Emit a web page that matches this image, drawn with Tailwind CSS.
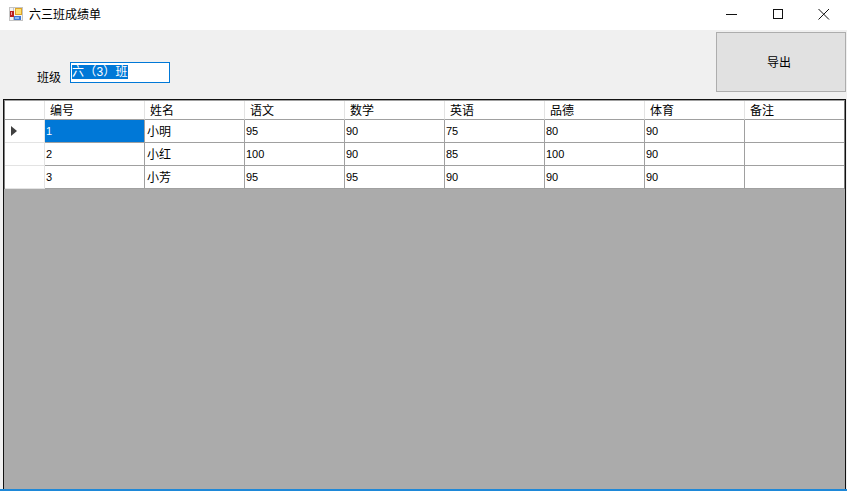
<!DOCTYPE html>
<html lang="zh">
<head>
<meta charset="utf-8">
<script src="https://cdn.jsdelivr.net/npm/@tailwindcss/browser@4"></script>
</head>
<body class="w-[847px] h-[491px] overflow-hidden bg-[#f0f0f0] text-black text-[12px] leading-none font-['Liberation_Sans','Noto_Sans_CJK_SC',sans-serif]">
<div class="flex flex-col h-full border-b-2 border-[#1e88d8]">
  <div class="h-[30px] bg-white flex items-center shrink-0">
    <svg class="ml-[9px] mb-[2px] w-[14px] h-[14px]" viewBox="0 0 14 14">
      <rect x="0" y="0" width="14" height="14" fill="#c4c4c4"/>
      <rect x="1" y="1" width="12" height="12" fill="#f4f4f4"/>
      <rect x="4" y="0" width="1" height="14" fill="#c4c4c4"/>
      <rect x="0" y="9" width="5" height="1" fill="#c4c4c4"/>
      <rect x="6" y="1" width="7" height="7" fill="#dca428"/>
      <rect x="7" y="2" width="5" height="5" fill="#ffe070"/>
      <rect x="1" y="4" width="4" height="6" fill="#b82020"/>
      <rect x="2" y="5" width="1" height="3" fill="#f0a0a0"/>
      <rect x="5" y="9" width="7" height="4" fill="#3f78d4"/>
      <rect x="6" y="10" width="4" height="2" fill="#8fb8f0"/>
    </svg>
    <span class="ml-[6px] text-[12px]">六三班成绩单</span>
    <div class="ml-auto flex items-center h-full">
      <svg class="w-[46px] h-[30px]" viewBox="0 0 46 30"><path d="M17 14.5H28" stroke="#111" fill="none"/></svg>
      <svg class="w-[46px] h-[30px]" viewBox="0 0 46 30"><rect x="18.5" y="9.5" width="9" height="9" stroke="#111" fill="none"/></svg>
      <svg class="w-[46px] h-[30px]" viewBox="0 0 46 30"><path d="M17.5 9L28 19.5M28 9L17.5 19.5" stroke="#111" fill="none"/></svg>
    </div>
  </div>
  <div class="h-[69px] shrink-0 flex items-start">
    <span class="ml-[37px] mt-[42px] w-[33px] shrink-0">班级</span>
    <div class="mt-[32px] w-[100px] h-[21px] bg-white border border-[#0078d7] px-[1px] pt-[2px] shrink-0">
      <span class="inline-block h-[14px] pt-[1px] bg-[#0078d7] text-white whitespace-nowrap text-[12px] tracking-[0.2px]">六（3）班</span>
    </div>
    <button class="ml-[546px] mt-[2px] w-[130px] h-[60px] bg-[#e1e1e1] border border-[#adadad] text-[12px] pr-[4px] pt-[1px] shrink-0">导出</button>
  </div>
  <div class="ml-[3px] mr-[1px] flex-1 bg-[#ababab] border border-[#111] border-b-0 min-h-0">
    <div class="grid grid-cols-[40px_repeat(7,100px)_99px] grid-rows-[19px_23px_23px_23px] w-[841px] border-l border-t border-r border-l-[#808080] border-t-[#a0a0a0] border-r-[#808080]">
      <div class="bg-white border-r border-b border-r-[#e3e3e3] border-b-[#a0a0a0]"></div>
      <div class="bg-white border-r border-b border-r-[#e3e3e3] border-b-[#a0a0a0] pl-[5px] pt-[4px]">编号</div>
      <div class="bg-white border-r border-b border-r-[#e3e3e3] border-b-[#a0a0a0] pl-[5px] pt-[4px]">姓名</div>
      <div class="bg-white border-r border-b border-r-[#e3e3e3] border-b-[#a0a0a0] pl-[5px] pt-[4px]">语文</div>
      <div class="bg-white border-r border-b border-r-[#e3e3e3] border-b-[#a0a0a0] pl-[5px] pt-[4px]">数学</div>
      <div class="bg-white border-r border-b border-r-[#e3e3e3] border-b-[#a0a0a0] pl-[5px] pt-[4px]">英语</div>
      <div class="bg-white border-r border-b border-r-[#e3e3e3] border-b-[#a0a0a0] pl-[5px] pt-[4px]">品德</div>
      <div class="bg-white border-r border-b border-r-[#e3e3e3] border-b-[#a0a0a0] pl-[5px] pt-[4px]">体育</div>
      <div class="bg-white border-b border-b-[#a0a0a0] pl-[5px] pt-[4px]">备注</div>

      <div class="bg-white border-r border-b border-[#e3e3e3] flex items-center pl-[6px]"><svg class="w-[6px] h-[10px]" viewBox="0 0 6 10"><path d="M0 0L6 5L0 10Z" fill="#404040"/></svg></div>
      <div class="bg-[#0078d7] text-white border-r border-b border-[#a0a0a0] pl-[1px] pt-[6px] text-[11px]">1</div>
      <div class="bg-white border-r border-b border-[#a0a0a0] pl-[2px] pt-[6px]">小明</div>
      <div class="bg-white border-r border-b border-[#a0a0a0] pl-[1px] pt-[6px] text-[11px]">95</div>
      <div class="bg-white border-r border-b border-[#a0a0a0] pl-[1px] pt-[6px] text-[11px]">90</div>
      <div class="bg-white border-r border-b border-[#a0a0a0] pl-[1px] pt-[6px] text-[11px]">75</div>
      <div class="bg-white border-r border-b border-[#a0a0a0] pl-[1px] pt-[6px] text-[11px]">80</div>
      <div class="bg-white border-r border-b border-[#a0a0a0] pl-[1px] pt-[6px] text-[11px]">90</div>
      <div class="bg-white border-b border-[#a0a0a0]"></div>

      <div class="bg-white border-r border-b border-[#e3e3e3]"></div>
      <div class="bg-white border-r border-b border-[#a0a0a0] pl-[1px] pt-[6px] text-[11px]">2</div>
      <div class="bg-white border-r border-b border-[#a0a0a0] pl-[2px] pt-[6px]">小红</div>
      <div class="bg-white border-r border-b border-[#a0a0a0] pl-[1px] pt-[6px] text-[11px]">100</div>
      <div class="bg-white border-r border-b border-[#a0a0a0] pl-[1px] pt-[6px] text-[11px]">90</div>
      <div class="bg-white border-r border-b border-[#a0a0a0] pl-[1px] pt-[6px] text-[11px]">85</div>
      <div class="bg-white border-r border-b border-[#a0a0a0] pl-[1px] pt-[6px] text-[11px]">100</div>
      <div class="bg-white border-r border-b border-[#a0a0a0] pl-[1px] pt-[6px] text-[11px]">90</div>
      <div class="bg-white border-b border-[#a0a0a0]"></div>

      <div class="bg-white border-r border-b border-[#e3e3e3]"></div>
      <div class="bg-white border-r border-b border-[#a0a0a0] pl-[1px] pt-[6px] text-[11px]">3</div>
      <div class="bg-white border-r border-b border-[#a0a0a0] pl-[2px] pt-[6px]">小芳</div>
      <div class="bg-white border-r border-b border-[#a0a0a0] pl-[1px] pt-[6px] text-[11px]">95</div>
      <div class="bg-white border-r border-b border-[#a0a0a0] pl-[1px] pt-[6px] text-[11px]">95</div>
      <div class="bg-white border-r border-b border-[#a0a0a0] pl-[1px] pt-[6px] text-[11px]">90</div>
      <div class="bg-white border-r border-b border-[#a0a0a0] pl-[1px] pt-[6px] text-[11px]">90</div>
      <div class="bg-white border-r border-b border-[#a0a0a0] pl-[1px] pt-[6px] text-[11px]">90</div>
      <div class="bg-white border-b border-[#a0a0a0]"></div>
    </div>
  </div>
</div>
</body>
</html>
